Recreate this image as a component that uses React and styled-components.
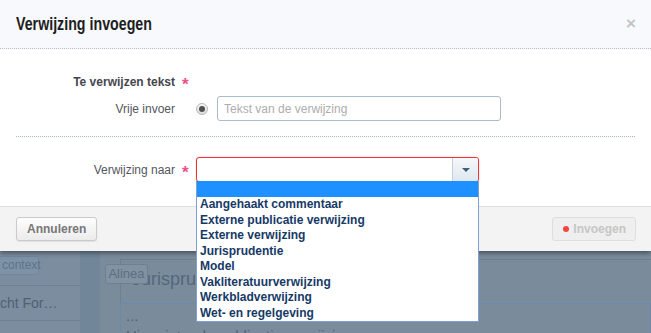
import React from "react";
import styled, { createGlobalStyle } from "styled-components";

const GlobalStyle = createGlobalStyle`
  html, body {
    margin: 0;
    padding: 0;
  }
  body {
    font-family: "Liberation Sans", Arial, sans-serif;
    font-size: 12px;
    overflow: hidden;
  }
`;

const Screen = styled.div`
  position: relative;
  width: 651px;
  height: 333px;
  overflow: hidden;
`;

/* dimmed application behind the dialog */

const Backdrop = styled.div`
  display: flex;
  height: 100%;
  background-color: #7a8c9c;
`;

const SidePanel = styled.div`
  width: 80px;
  padding-top: 256px;
  background-color: #7b8d9e;
  overflow: hidden;
`;

const ContextButton = styled.div`
  width: 48px;
  height: 19px;
  margin-left: -9px;
  padding-left: 10px;
  box-sizing: border-box;
  border: 1px solid #6f879d;
  border-radius: 3px;
  background-color: #7d92a6;
  color: #5e7488;
  font-size: 12px;
  line-height: 17px;
`;

const SideRow = styled.div`
  border-top: 1px solid #6e8293;
  margin-top: ${(p) => p.$gap || 0}px;
  height: 34px;
  color: #4f6173;
  font-size: 14px;
  line-height: 34px;
  white-space: nowrap;
`;

const SideText = styled.span`
  display: inline-block;
  margin-left: -25px;
`;

const Gutter = styled.div`
  width: 20px;
  background-color: #72869a;
`;

const MainPanel = styled.div`
  position: relative;
  flex: 1;
  padding: 259px 0 0 20px;
`;

const Card = styled.div`
  height: 44px;
  border-top: 1px solid #6d8091;
  border-left: 1px solid #6d8091;
  padding: 9px 0 0 11px;
  box-sizing: border-box;
  color: #53677b;
  font-size: 18px;
`;

const Badge = styled.div`
  position: absolute;
  left: 5px;
  top: 264px;
  width: 43px;
  height: 20px;
  box-sizing: border-box;
  border: 1px solid #6e8192;
  border-radius: 3px;
  background-color: #8193a3;
  color: #5c6e80;
  font-size: 13px;
  line-height: 18px;
  text-align: center;
`;

const TextBox = styled.div`
  border: 1px solid #6b89ad;
  padding: 2px 5px;
  color: #4f6376;
  font-size: 15px;
  line-height: 20px;
  white-space: nowrap;
`;

/* dialog */

const Dialog = styled.div`
  position: absolute;
  top: 0;
  left: 0;
  width: 100%;
  background-color: #fff;
  box-shadow: 0 2px 5px rgba(0, 0, 0, 0.45);
`;

const Header = styled.div`
  display: flex;
  align-items: center;
  justify-content: space-between;
  height: 48px;
  padding: 0 16px;
  background-color: #f7f9fd;
  border-bottom: 1px dotted #b8bcc4;
`;

const Title = styled.h1`
  display: inline-block;
  margin: 0;
  font-size: 18px;
  font-weight: bold;
  color: #1e1e22;
  transform: scaleX(0.79);
  transform-origin: left center;
  white-space: nowrap;
`;

const Close = styled.span`
  color: #c4c4c4;
  font-size: 17px;
  font-weight: bold;
  margin-right: -1px;
`;

const Body = styled.div`
  padding: 24px 16px 24px 0;
`;

const FormRow = styled.div`
  display: grid;
  grid-template-columns: 175px 21px 1fr;
  align-items: center;
  height: ${(p) => p.$height}px;
  margin-top: ${(p) => p.$top || 0}px;
`;

const Label = styled.label`
  text-align: right;
  color: ${(p) => (p.$strong ? "#45464e" : "#55565e")};
  font-weight: ${(p) => (p.$strong ? "bold" : "normal")};
  font-size: 12px;
`;

const Required = styled.span`
  padding-left: 7px;
  color: #ee4f86;
  font-size: 17px;
  font-weight: bold;
  line-height: 10px;
  padding-top: 6px;
`;

const Control = styled.div`
  display: flex;
  align-items: center;
  gap: 9px;
`;

const Radio = styled.span`
  display: flex;
  align-items: center;
  justify-content: center;
  width: 12px;
  height: 12px;
  box-sizing: border-box;
  border: 1px solid #b9b9b9;
  border-radius: 50%;
  background: linear-gradient(#f6f6f6, #dedede);
  &::after {
    content: "";
    width: 6px;
    height: 6px;
    border-radius: 50%;
    background-color: #505050;
  }
`;

const TextInput = styled.input`
  width: 284px;
  height: 25px;
  box-sizing: border-box;
  padding: 0 6px;
  border: 1px solid #a9bdcd;
  border-radius: 3px;
  font-family: "Liberation Sans", Arial, sans-serif;
  font-size: 12px;
  &::placeholder {
    color: #adadad;
  }
`;

const Divider = styled.div`
  margin: 15px 0 0 16px;
  border-top: 1px dotted #a5b8c6;
`;

const SelectBox = styled.div`
  position: relative;
  display: flex;
  width: 283px;
  height: 25px;
  box-sizing: border-box;
  border: 1px solid #e8373a;
  border-radius: 3px;
  box-shadow: 0 0 2px rgba(232, 55, 58, 0.35);
  background-color: #fff;
`;

const SelectValue = styled.div`
  flex: 1;
`;

const SelectArrow = styled.div`
  display: flex;
  align-items: center;
  justify-content: center;
  width: 25px;
  border-left: 1px solid #c3cfda;
  border-radius: 0 2px 2px 0;
  background: linear-gradient(#f5f8fb, #dfe7ef);
  &::after {
    content: "";
    border-left: 4px solid transparent;
    border-right: 4px solid transparent;
    border-top: 4px solid #3c5e80;
  }
`;

const OptionList = styled.ul`
  position: absolute;
  top: 100%;
  left: -1px;
  width: 283px;
  box-sizing: border-box;
  margin: 0;
  padding: 0;
  list-style: none;
  background-color: #fff;
  border: 1px solid #7f9fd0;
  border-top: 0;
  z-index: 2;
`;

const Option = styled.li`
  height: ${(p) => (p.$active ? 16 : 15.5)}px;
  padding-left: 3px;
  line-height: 15.5px;
  font-size: 12px;
  font-weight: bold;
  color: #163a66;
  background-color: ${(p) => (p.$active ? "#1e90ff" : "transparent")};
  white-space: nowrap;
`;

const Footer = styled.div`
  display: flex;
  justify-content: space-between;
  padding: 10px 15px 10px 16px;
  background-color: #f3f3f3;
  border-top: 1px solid #dcdcdc;
`;

const Button = styled.button`
  display: flex;
  align-items: center;
  gap: 4px;
  height: 24px;
  padding: 0 ${(p) => (p.$disabled ? 9 : 10)}px 0 10px;
  border: 1px solid ${(p) => (p.$disabled ? "#dedede" : "#cacaca")};
  border-radius: 3px;
  background: ${(p) =>
    p.$disabled ? "#efefef" : "linear-gradient(#fdfdfd, #ececec)"};
  color: ${(p) => (p.$disabled ? "#c6c6c6" : "#777")};
  font-family: "Liberation Sans", Arial, sans-serif;
  font-size: 12px;
  font-weight: bold;
  box-shadow: ${(p) => (p.$disabled ? "none" : "0 1px 1px rgba(0,0,0,0.08)")};
`;

const Dot = styled.span`
  width: 6px;
  height: 6px;
  border-radius: 50%;
  background-color: #f04545;
`;

const options = [
  "",
  "Aangehaakt commentaar",
  "Externe publicatie verwijzing",
  "Externe verwijzing",
  "Jurisprudentie",
  "Model",
  "Vakliteratuurverwijzing",
  "Werkbladverwijzing",
  "Wet- en regelgeving",
];

const App = () => {
  return (
    <Screen>
      <GlobalStyle />
      <Backdrop>
        <SidePanel>
          <ContextButton>context</ContextButton>
          <SideRow $gap={10}>
            <SideText>Bericht For…</SideText>
          </SideRow>
          <SideRow />
        </SidePanel>
        <Gutter />
        <MainPanel>
          <Card>Jurisprudentie</Card>
          <TextBox>
            ...
            <br />
            Hier ziet u de publicatie verwijzing
          </TextBox>
          <Badge>Alinea</Badge>
        </MainPanel>
      </Backdrop>

      <Dialog>
        <Header>
          <Title>Verwijzing invoegen</Title>
          <Close>×</Close>
        </Header>
        <Body>
          <FormRow $height={18}>
            <Label $strong>Te verwijzen tekst</Label>
            <Required>*</Required>
          </FormRow>
          <FormRow $height={25} $top={5}>
            <Label>Vrije invoer</Label>
            <span />
            <Control>
              <Radio />
              <TextInput placeholder="Tekst van de verwijzing" />
            </Control>
          </FormRow>
          <Divider />
          <FormRow $height={25} $top={20}>
            <Label>Verwijzing naar</Label>
            <Required>*</Required>
            <SelectBox>
              <SelectValue />
              <SelectArrow />
              <OptionList>
                {options.map((o, i) => (
                  <Option key={i} $active={i === 0}>
                    {o}
                  </Option>
                ))}
              </OptionList>
            </SelectBox>
          </FormRow>
        </Body>
        <Footer>
          <Button>Annuleren</Button>
          <Button $disabled>
            <Dot />
            Invoegen
          </Button>
        </Footer>
      </Dialog>
    </Screen>
  );
};

export default App;
